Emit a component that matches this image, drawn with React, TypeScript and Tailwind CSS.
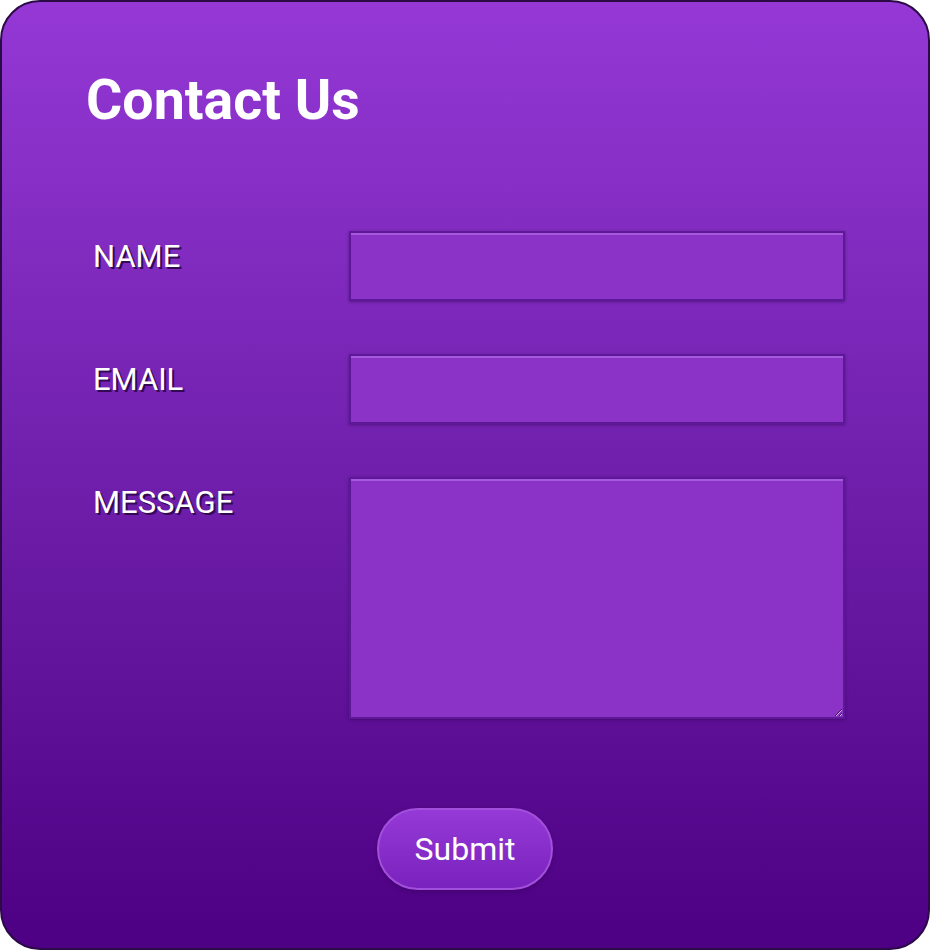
import React from 'react';

const fields = [
  { label: 'NAME', kind: 'input' },
  { label: 'EMAIL', kind: 'input' },
  { label: 'MESSAGE', kind: 'textarea' },
] as const;

const boxClass =
  'w-[496px] bg-[#8a33c6] border-2 border-[#5c1896] shadow-[inset_0_2px_0_rgba(190,120,240,0.55),0_1px_3px_rgba(40,0,70,0.45)] outline-none text-white text-xl px-3';

export default function App() {
  return (
    <div className="w-[930px] h-[950px] bg-white font-['Roboto',sans-serif]">
      <div className="w-full h-full rounded-[40px] border-2 border-[#2a0b45] bg-gradient-to-b from-[#9538d6] to-[#4d0083] flex flex-col">
        <h1 className="ml-[84px] mt-[71px] text-[55.5px] leading-none font-bold text-white">Contact Us</h1>

        <form className="mt-[102px] flex flex-col gap-[53px]" onSubmit={(e) => e.preventDefault()}>
          {fields.map((f) => (
            <div key={f.label} className="flex items-start">
              <label className="w-[347px] pl-[91px] pt-[10px] text-[31px] leading-none text-white [text-shadow:2px_2px_0_#330854]">
                {f.label}
              </label>
              {f.kind === 'input' ? (
                <input type="text" className={`${boxClass} h-[70px]`} />
              ) : (
                <textarea className={`${boxClass} h-[242px] py-2`} />
              )}
            </div>
          ))}
        </form>

        <div className="mt-[89px] flex justify-center">
          <button
            type="button"
            className="w-[176px] h-[82px] rounded-full bg-gradient-to-b from-[#9539d7] to-[#7a22bd] border-2 border-[#a24fdc] text-white text-[32px] shadow-[0_2px_4px_rgba(40,0,70,0.35)]"
          >
            Submit
          </button>
        </div>
      </div>
    </div>
  );
}
